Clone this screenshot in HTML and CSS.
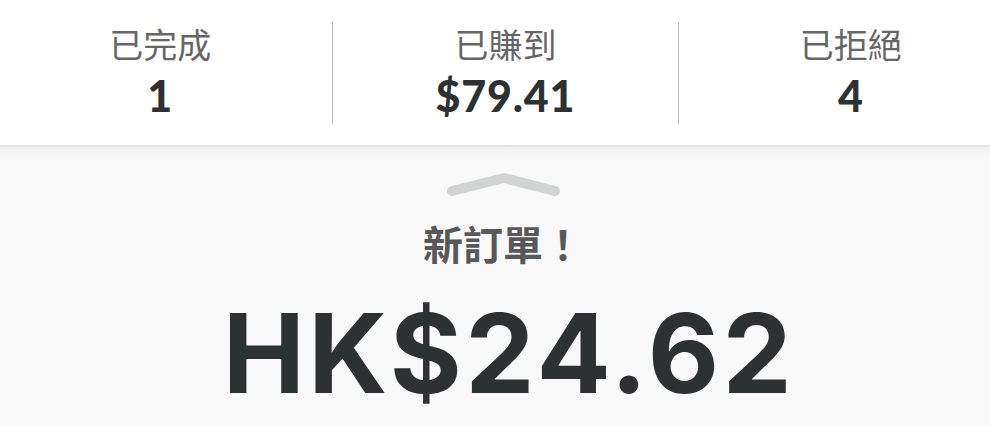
FILE: index.html
```html
<!DOCTYPE html>
<html lang="zh-Hant">
<head>
<meta charset="utf-8">
<link rel="stylesheet" href="styles.css">
</head>
<body>
<div class="stats">
  <div class="stat">
    <div class="label">已完成</div>
    <div class="value">1</div>
  </div>
  <div class="stat divided">
    <div class="label">已賺到</div>
    <div class="value">$79.41</div>
  </div>
  <div class="stat divided">
    <div class="label">已拒絕</div>
    <div class="value">4</div>
  </div>
</div>
<div class="sheet">
  <svg class="handle" width="120" height="30" viewBox="0 0 120 30">
    <polyline points="10,22 62,9 113,22" fill="none" stroke="#d2d4d4" stroke-width="10" stroke-linecap="round" stroke-linejoin="round"/>
  </svg>
  <div class="title">新訂單！</div>
  <div class="amount">HK$24.62</div>
</div>
</body>
</html>
```
FILE: styles.css
```css
html, body {
  margin: 0;
  padding: 0;
  width: 990px;
  height: 426px;
  overflow: hidden;
  background: #f9f9f9;
}
.stats {
  display: flex;
  width: 1035px;
  margin-left: -12px;
  height: 147px;
  padding-top: 22px;
  box-sizing: border-box;
  background: #ffffff;
  border-bottom: 2px solid #e3e3e3;
}
.stat {
  width: 345px;
  height: 102px;
  display: flex;
  flex-direction: column;
  align-items: center;
}
.divided {
  border-left: 1px solid #b9b9b9;
}
.label {
  font-family: "Noto Sans CJK TC", "Noto Sans", sans-serif;
  font-size: 34px;
  line-height: 46px;
  color: #666666;
  margin-top: -1px;
}
.value {
  font-family: Lato, "Liberation Sans", sans-serif;
  font-weight: 900;
  font-size: 43px;
  line-height: 46px;
  color: #2d3132;
  letter-spacing: 0.8px;
  margin-top: 6px;
}
.sheet {
  display: flex;
  flex-direction: column;
  align-items: center;
  background: linear-gradient(#f1f1f1, #f9f9f9 14px);
  height: 277px;
}
.handle {
  display: block;
  margin-top: 22px;
  margin-left: 14px;
}
.title {
  font-family: "Noto Sans CJK TC", sans-serif;
  font-weight: 700;
  font-size: 40px;
  line-height: 50px;
  color: #585858;
  margin-top: 19px;
  margin-left: 16px;
}
.amount {
  font-family: Inter, "Liberation Sans", sans-serif;
  font-weight: 700;
  font-size: 110px;
  line-height: 130px;
  letter-spacing: 3.5px;
  color: #2d3132;
  margin-top: 20px;
  margin-left: 28px;
}
```
